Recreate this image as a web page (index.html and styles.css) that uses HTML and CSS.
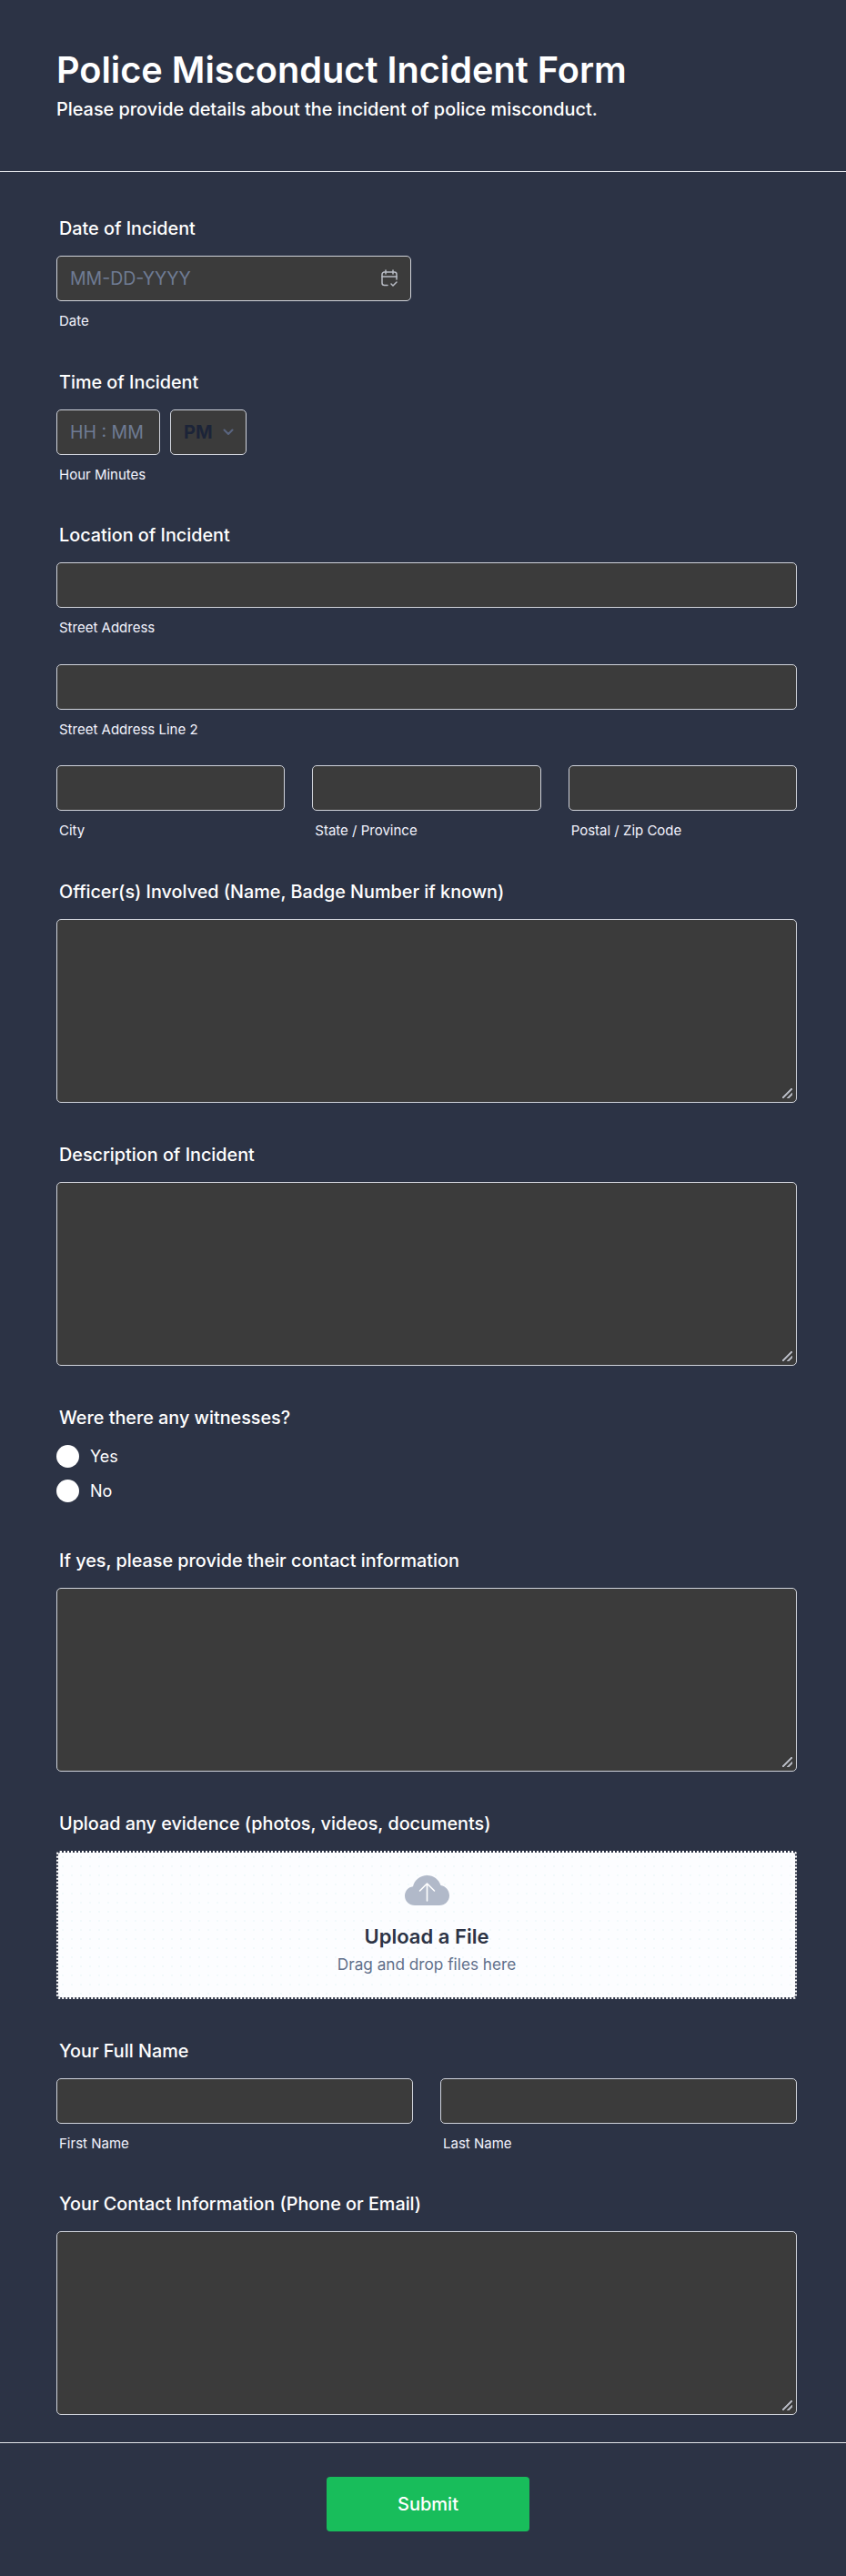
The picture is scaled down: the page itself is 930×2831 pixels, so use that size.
FILE: index.html
```html
<!DOCTYPE html>
<html lang="en">

<head>
    <meta charset="UTF-8">
    <meta name="viewport" content="width=device-width, initial-scale=1.0">
    <title>Police Misconduct Incident Form</title>
    <link rel="stylesheet" href="styles.css">
</head>

<body>
    <form class="form">
        <header class="form-header">
            <h1 class="form-title">Police Misconduct Incident Form</h1>
            <p class="form-subtitle">Please provide details about the incident of police misconduct.</p>
        </header>

        <div class="form-body">
            <div class="field">
                <label class="field-label">Date of Incident</label>
                <div class="input-wrap date-wrap">
                    <input class="input" type="text" placeholder="MM-DD-YYYY">
                    <svg class="date-icon" width="20" height="20" viewBox="0 0 20 20" fill="none" stroke="#b9bdc6"
                        stroke-width="1.5" stroke-linecap="round" stroke-linejoin="round">
                        <path d="M8 17.500H4.500a2.500 2.500 0 0 1-2.500-2.500V5.500A2.500 2.500 0 0 1 4.500 3h11A2.500 2.500 0 0 1 18 5.500V11" />
                        <path d="M2 8h16M6 1v4M14 1v4" />
                        <path d="M12 16l2 2 4-4" />
                    </svg>
                </div>
                <span class="sub-label">Date</span>
            </div>

            <div class="field">
                <label class="field-label">Time of Incident</label>
                <div class="time-row">
                    <input class="input time-input" type="text" placeholder="HH : MM">
                    <div class="input-wrap ampm-wrap">
                        <select class="input ampm-select">
                            <option>PM</option>
                            <option>AM</option>
                        </select>
                        <svg class="ampm-icon" width="12" height="8" viewBox="0 0 12 8" fill="none" stroke="#5a6580"
                            stroke-width="2" stroke-linecap="round" stroke-linejoin="round">
                            <path d="M1.500 1.500L6 6l4.500-4.500" />
                        </svg>
                    </div>
                </div>
                <span class="sub-label">Hour Minutes</span>
            </div>

            <div class="field">
                <label class="field-label">Location of Incident</label>
                <div class="address-line">
                    <input class="input" type="text">
                    <span class="sub-label">Street Address</span>
                </div>
                <div class="address-line">
                    <input class="input" type="text">
                    <span class="sub-label">Street Address Line 2</span>
                </div>
                <div class="columns-3">
                    <div>
                        <input class="input" type="text">
                        <span class="sub-label">City</span>
                    </div>
                    <div>
                        <input class="input" type="text">
                        <span class="sub-label">State / Province</span>
                    </div>
                    <div>
                        <input class="input" type="text">
                        <span class="sub-label">Postal / Zip Code</span>
                    </div>
                </div>
            </div>

            <div class="field">
                <label class="field-label">Officer(s) Involved (Name, Badge Number if known)</label>
                <textarea class="input textarea"></textarea>
            </div>

            <div class="field">
                <label class="field-label">Description of Incident</label>
                <textarea class="input textarea"></textarea>
            </div>

            <div class="field">
                <label class="field-label radio-title">Were there any witnesses?</label>
                <label class="radio-row"><input class="radio" type="radio" name="witnesses"> Yes</label>
                <label class="radio-row"><input class="radio" type="radio" name="witnesses"> No</label>
            </div>

            <div class="field">
                <label class="field-label">If yes, please provide their contact information</label>
                <textarea class="input textarea"></textarea>
            </div>

            <div class="field">
                <label class="field-label">Upload any evidence (photos, videos, documents)</label>
                <div class="upload-box">
                    <svg class="upload-icon" width="49" height="33" viewBox="0 0 49 33">
                        <path fill="#b1b9c9"
                            d="M11 33C5 33 0 28.500 0 22.500C0 17 4 13 9 12.300C10.500 5 17 0 24.500 0C31.500 0 37.500 4.500 39.500 11C45 12 49 16.500 49 22.300C49 28.500 44 33 38 33Z" />
                        <path fill="none" stroke="#fff" stroke-width="1.600" stroke-linecap="round"
                            stroke-linejoin="round" d="M24.500 28V9M16.500 17l8-8 8 8" />
                    </svg>
                    <span class="upload-title">Upload a File</span>
                    <span class="upload-text">Drag and drop files here</span>
                </div>
            </div>

            <div class="field">
                <label class="field-label">Your Full Name</label>
                <div class="columns-2">
                    <div>
                        <input class="input" type="text">
                        <span class="sub-label">First Name</span>
                    </div>
                    <div>
                        <input class="input" type="text">
                        <span class="sub-label">Last Name</span>
                    </div>
                </div>
            </div>

            <div class="field last-field">
                <label class="field-label">Your Contact Information (Phone or Email)</label>
                <textarea class="input textarea"></textarea>
            </div>
        </div>

        <div class="form-footer">
            <button class="submit-btn" type="button">Submit</button>
        </div>
    </form>
</body>

</html>
```

FILE: styles.css
```css
* {
    box-sizing: border-box;
}

body {
    margin: 0;
    background-color: #2c3345;
    color: #fff;
    font-family: Inter, "Liberation Sans", sans-serif;
}

.form-header {
    height: 189px;
    padding: 53px 62px 0;
    border-bottom: 1px solid #e3e5ea;
}

.form-title {
    margin: 0;
    font-size: 39.7px;
    line-height: 48px;
    font-weight: 600;
}

.form-subtitle {
    margin: 5px 0 0;
    font-size: 19.87px;
    line-height: 28px;
    font-weight: 500;
}

.form-body {
    padding: 48px 54px 0 62px;
}

.field {
    margin-bottom: 43px;
}

.last-field {
    margin-bottom: 0;
}

.field-label {
    display: block;
    margin: 0 0 16px 3px;
    font-size: 19.8px;
    line-height: 28px;
    font-weight: 500;
}

.sub-label {
    display: block;
    margin: 12px 0 0 3px;
    font-size: 15px;
    line-height: 19.5px;
    color: #f3f3fe;
}

.input {
    display: block;
    width: 100%;
    height: 50px;
    padding: 0 14px;
    background-color: #3b3b3b;
    border: 1px solid #d0d3db;
    border-radius: 5px;
    color: #fff;
    font-family: inherit;
    font-size: 19.5px;
}

.input::placeholder {
    color: #6f7b94;
}

.input-wrap {
    position: relative;
}

.date-wrap {
    width: 390px;
}

.date-icon {
    position: absolute;
    top: 15px;
    right: 14px;
}

.time-row {
    display: flex;
    gap: 11px;
}

.time-input {
    width: 114px;
}

.ampm-wrap {
    width: 84px;
}

.ampm-select {
    appearance: none;
    color: #1c2438;
    font-size: 20px;
    font-weight: 700;
}

.ampm-icon {
    position: absolute;
    top: 21px;
    right: 14px;
}

.address-line {
    margin-bottom: 30px;
}

.columns-3 {
    display: grid;
    grid-template-columns: repeat(3, 1fr);
    gap: 30px;
}

.columns-2 {
    display: grid;
    grid-template-columns: repeat(2, 1fr);
    gap: 30px;
}

.textarea {
    height: 202px;
    padding: 10px 14px;
    resize: vertical;
}

.textarea::-webkit-resizer {
    background: linear-gradient(135deg, transparent 44%, #b0b3bc 44%, #b0b3bc 56%, transparent 56%, transparent 70%, #b0b3bc 70%, #b0b3bc 82%, transparent 82%) no-repeat 0 0 / 11px 11px;
}

.radio-title {
    margin-bottom: 10px;
}

.radio-row {
    display: flex;
    align-items: center;
    gap: 12px;
    height: 38px;
    font-size: 18px;
}

.radio {
    appearance: none;
    width: 25px;
    height: 25px;
    margin: 0;
    background-color: #fff;
    border-radius: 50%;
}

.upload-box {
    display: flex;
    flex-direction: column;
    align-items: center;
    height: 163px;
    padding-top: 25.5px;
    background-color: #fcfdff;
    background-image: radial-gradient(#f2f9fb 1px, transparent 1px);
    background-size: 10px 10px;
    background-clip: padding-box;
    border: 2px dotted #fff;
    border-radius: 4px;
}

.upload-title {
    margin-top: 18px;
    color: #2c3345;
    font-size: 22px;
    line-height: 32px;
    font-weight: 600;
}

.upload-text {
    margin-top: 2px;
    color: #5f6f8a;
    font-size: 17.2px;
    line-height: 26px;
}

.form-footer {
    display: flex;
    justify-content: center;
    margin-top: 30px;
    padding: 37px 0 49px 11px;
    border-top: 1px solid #e3e5ea;
}

.submit-btn {
    width: 223px;
    height: 60px;
    background-color: #18bd5b;
    border: none;
    border-radius: 4px;
    color: #fff;
    font-family: inherit;
    font-size: 20px;
    font-weight: 500;
    cursor: pointer;
}
```
